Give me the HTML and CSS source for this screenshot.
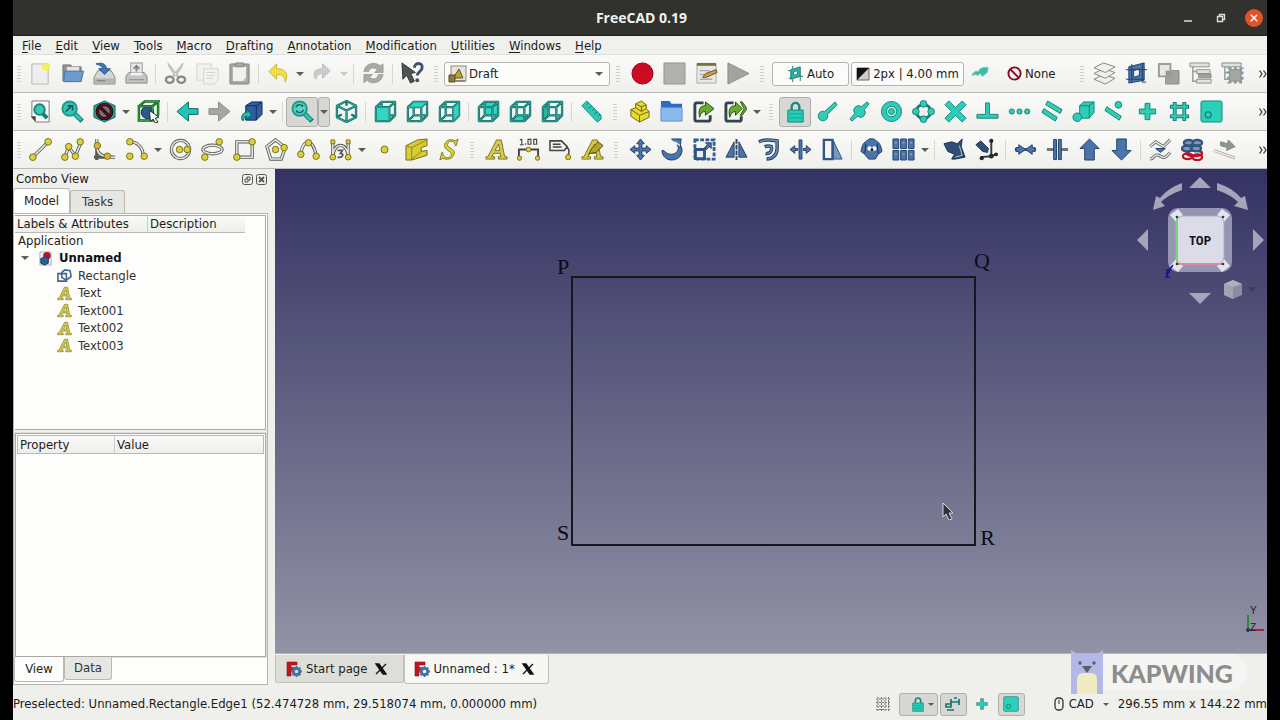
FILE: index.html
```html
<!DOCTYPE html>
<html lang="en">
<head>
<meta charset="utf-8">
<title>FreeCAD 0.19</title>
<link rel="stylesheet" href="styles.css">
</head>
<body>
<svg class="defs" aria-hidden="true">
  <symbol id="cube" viewBox="0 0 24 24"><path class="wire" d="M2 7.500V22H16V7.500zM2 7.500 8 2H22L16 7.500M22 2V16L16 22M8 2V16H22M8 16 2 22"/><path class="wire-lit" d="M2 7.500V22H16V7.500zM2 7.500 8 2H22L16 7.500M22 2V16L16 22M8 2V16H22M8 16 2 22"/></symbol>
  <symbol id="letter-a" viewBox="0 0 24 24"><path d="M1 22v-2.500h2L12 2h5l3.500 17.500H23V22h-9v-2.500h2.500l-.6-3.500H9l-2 3.500h3V22zM10.500 13h5L14.200 6.500z" fill="#d3cb43" stroke="#6c6a20" stroke-width=".9" fill-rule="evenodd"/></symbol>
  <symbol id="fc" viewBox="0 0 16 16"><path d="M1 1h10v3H5v2.500h4v3H5V15H1z" fill="#c8131f" stroke="#8a0f18" stroke-width=".6"/><circle cx="10.500" cy="10.500" r="3.200" fill="none" stroke="#46709f" stroke-width="2.800"/><path d="M10.500 5v2M10.500 14v2M5 10.500h2M14 10.500h2M6.600 6.600 8 8M13 13l1.400 1.400M14.400 6.600 13 8M6.600 14.400 8 13" stroke="#46709f" stroke-width="1.800"/></symbol>
  <symbol id="grid-lock" viewBox="0 0 24 24"><path d="M8 11V7a4 4 0 0 1 8 0v4" fill="none" stroke="#16877c" stroke-width="2.500"/><path d="M4 10.500h16V23H4z" fill="#25cdb6" stroke="#12877a"/><path d="M5 14.500h14M5 18.500h14" stroke="#16a594"/></symbol>
  <symbol id="plane-sq" viewBox="0 0 24 24"><rect x="1" y="1" width="22" height="22" rx="2" fill="#2bd0b8" stroke="#14887c"/><circle cx="8.500" cy="15.500" r="3.200" fill="none" stroke="#128074" stroke-width="1.300"/></symbol>
  <symbol id="chevrons" viewBox="0 0 8 10"><path d="m.5 1.500 2.500 3.500-2.500 3.500M4.500 1.500 7 5 4.500 8.500" fill="none" stroke="#333" stroke-width="1.200"/></symbol>
</svg>
<div class="app">
  <header class="titlebar">
    <h1>FreeCAD 0.19</h1>
    <div class="winbtns">
      <button aria-label="Minimize"><svg viewBox="0 0 18 18"><path d="M5 12h8" stroke="#ddd" stroke-width="1.500"/></svg></button>
      <button aria-label="Restore"><svg viewBox="0 0 18 18"><path d="M5.500 7.500h5v5h-5zM7.500 7V5.500h5v5H11" fill="none" stroke="#ddd" stroke-width="1.400"/></svg></button>
      <button aria-label="Close"><svg viewBox="0 0 18 18"><circle cx="9" cy="9" r="9" fill="#e2532a"/><path d="m5.800 5.800 6.400 6.400m0-6.400-6.400 6.400" stroke="#fff" stroke-width="1.500"/></svg></button>
    </div>
  </header>

  <nav class="menubar">
    <button><u>F</u>ile</button><button><u>E</u>dit</button><button><u>V</u>iew</button><button><u>T</u>ools</button><button><u>M</u>acro</button><button><u>D</u>rafting</button><button><u>A</u>nnotation</button><button><u>M</u>odification</button><button><u>U</u>tilities</button><button><u>W</u>indows</button><button><u>H</u>elp</button>
  </nav>

  <div class="toolbar">
    <i class="grip first"></i>
    <button class="tool" aria-label="New"><svg viewBox="0 0 24 24"><path d="M3 2h17v21H3z" fill="#eee" stroke="#b5b5ae"/><circle cx="18" cy="5" r="4.500" fill="#f5f04a" opacity=".85"/></svg></button>
    <button class="tool" aria-label="Open"><svg viewBox="0 0 24 24"><path d="M2 3h8l2 2h9v15H2z" fill="#8e918e" stroke="#777"/><path d="M6 5h13v6H6z" fill="#e4e4e4"/><path d="M4 9.500h19.500L21 20.500H3z" fill="#6b9acb" stroke="#4a76aa"/></svg></button>
    <button class="tool" aria-label="Save"><svg viewBox="0 0 24 24"><path d="M5 9h14l4 7v7H1v-7z" fill="#d5d5d1" stroke="#888"/><path d="M2 17h20v5H2z" fill="#b5b5b0"/><path d="M4 19.500h9" stroke="#777"/><path d="M3 2c6-2 11 0 11 5h4l-6 6-6-6h4C10 5 7 3 3 2z" fill="#4676b1" stroke="#2a588f"/></svg></button>
    <button class="tool" aria-label="Print"><svg viewBox="0 0 24 24"><path d="M6 1h12v12H6z" fill="#e7e7e7" stroke="#999"/><path d="M12 4v6M9 7l3-3 3 3" stroke="#888" fill="none" stroke-width="2"/><path d="M4 11h16l3 4v7H1v-7z" fill="#c4c4c1" stroke="#888"/><path d="M6 11h12v3H6z" fill="#f2f2f2"/><path d="M4 18.500h16" stroke="#888"/></svg></button>
    <i class="sep"></i>
    <button class="tool" aria-label="Cut"><svg viewBox="0 0 24 24"><path d="M4 1c1 5 4 9 9 14l2-1C10 9 8 5 4 1zM20 1c-1 5-4 9-9 14l-2-1C14 9 16 5 20 1z" fill="#c6c6c4" stroke="#aaa" stroke-width=".6"/><g fill="none" stroke="#878787" stroke-width="2.400"><ellipse cx="6" cy="18.500" rx="4" ry="3.300"/><ellipse cx="18" cy="18.500" rx="4" ry="3.300"/></g></svg></button>
    <button class="tool" aria-label="Copy"><svg viewBox="0 0 24 24"><g fill="#f2f2ef" stroke="#d2d2cf"><path d="M1 2h15v17H1z"/><path d="M8 7h15v12l-4 4H8z"/><path d="M11 11h9M11 14h9M11 17h7"/></g></svg></button>
    <button class="tool" aria-label="Paste"><svg viewBox="0 0 24 24"><rect x="2" y="2" width="20" height="21" rx="1" fill="#a2a29f" stroke="#868683"/><path d="M5 5h14v15H5z" fill="#f1f1ee"/><path d="M8 1h8v4H8z" fill="#aaa" stroke="#888"/><path d="m19 16-4 4h4z" fill="#bbb"/></svg></button>
    <i class="sep"></i>
    <button class="tool" aria-label="Undo"><svg viewBox="0 0 24 24"><path d="m2 10 8-8v5c9 0 13 5 9 14 0-6-3-8-9-8v5z" fill="#efe04b" stroke="#c7b429"/></svg></button><button class="drop" aria-label="Undo list"></button>
    <button class="tool" aria-label="Redo"><svg viewBox="0 0 24 24"><path d="m20 9-8-7v5C4 7 1 11 5 18c1-4 3-6 7-6v5z" fill="#ccc" stroke="#bdbdbd"/></svg></button><button class="drop dim" aria-label="Redo list"></button>
    <i class="sep"></i>
    <button class="tool" aria-label="Refresh"><svg viewBox="0 0 24 24"><path d="M2 10C3 1 14-1 19 4l3-2v9h-9l3-3C12 5 8 6 7 10zM22 13c-1 9-12 11-17 6l-3 3v-9h9l-3 3c4 3 8 2 9-3z" fill="#a9a9a6" stroke="#92928f" stroke-width=".7"/></svg></button>
    <i class="sep"></i>
    <button class="tool" aria-label="What's this"><svg viewBox="0 0 24 24"><path d="m1 1 14 10-5 1 4 8-4 2-4-8-4 4z" fill="#4e5456" stroke="#333"/><path d="M14 6c0-6 9-6 8 0 0 4-5 4-5 8" fill="none" stroke="#40536c" stroke-width="3"/><circle cx="17" cy="19" r="2" fill="#40536c"/></svg></button>
    <i class="grip"></i>
    <label class="combo"><svg viewBox="0 0 20 20"><rect x="3" y="2" width="15" height="15" fill="#e8e6dc" stroke="#8a8870"/><path d="M5 14 11 5l4 9z" fill="#b7a52f" stroke="#5c5726"/><path d="M1 11h6v7H1z" fill="#8d7c35" stroke="#5b4a23"/><path d="M8 17h9" stroke="#555"/></svg><select aria-label="Workbench"><option>Draft</option></select></label>
    <i class="grip"></i>
    <button class="tool" aria-label="Record macro"><svg viewBox="0 0 24 24"><circle cx="12" cy="12" r="11" fill="#cc0a22" stroke="#8d0518"/></svg></button>
    <button class="tool" aria-label="Stop macro"><svg viewBox="0 0 24 24"><path d="M1 1h22v22H1z" fill="#b0b0ae" stroke="#979795"/></svg></button>
    <button class="tool" aria-label="Edit macro"><svg viewBox="0 0 24 24"><path d="M2 2h20v20H2z" fill="#e8e8e4" stroke="#aaa"/><path d="M2 1h20v3H2z" fill="#73733f"/><path d="M5 9h10M5 13h5M5 18h13" stroke="#aaa" stroke-width="1.500"/><path d="m8 16 3-4L22 8l1 3-11 5z" fill="#c69b54" stroke="#665027"/></svg></button>
    <button class="tool" aria-label="Run macro"><svg viewBox="0 0 24 24"><path d="m1 1 22 11L1 23z" fill="#a3a3a1" stroke="#8b8b89"/></svg></button>
    <i class="grip"></i>
    <button class="field plane"><svg viewBox="0 0 18 18"><path d="M4 5 14 2v10L4 15zM7 7v4l4-1V6z" fill="#28b8a8" stroke="#177b73" fill-rule="evenodd"/><path d="M1 6h3M2 14h3M13 12h4M6 15v3M14 12v5M6 1v3" stroke="#177b73"/></svg>Auto</button>
    <button class="field line"><svg viewBox="0 0 14 14"><path d="M1 1h12v12H1z" fill="#ccc" stroke="#666"/><path d="M1 13V1h12z" fill="#111"/></svg>2px | 4.00 mm</button>
    <button class="tool" aria-label="Apply style"><svg viewBox="0 0 24 24"><path d="M3 14c2-4 4-5 7-4 1-4 5-5 10-4l-1 5-5 4-2-3-3 2-2-1z" fill="#35bda9" stroke="#73c8bb"/></svg></button>
    <button class="plain"><svg viewBox="0 0 16 16"><circle cx="8" cy="8" r="6.500" fill="#f5eeee" stroke="#7d0d22" stroke-width="2"/><path d="m3.500 3.500 9 9" stroke="#7d0d22" stroke-width="2"/></svg>None</button>
    <i class="grip far"></i>
    <button class="tool" aria-label="Layers"><svg viewBox="0 0 24 24"><g fill="#efefed" stroke="#858583"><path d="m1 18 10-5 12 4-10 6z"/><path d="m1 12 10-5 12 4-10 6z"/><path d="m1 6 10-5 12 4-10 6z"/></g></svg></button>
    <button class="tool" aria-label="Plane proxy"><svg viewBox="0 0 24 24"><path d="M4 5 20 1v18L4 22z M9 9v7l6-2V7z" fill="#4b75ad" stroke="#203f6b" fill-rule="evenodd"/><path d="M1 8h22M1 18h19M7 2v20M18 1v20h4" stroke="#203f6b" fill="none"/></svg></button>
    <button class="tool" aria-label="Toggle display mode"><svg viewBox="0 0 24 24"><path d="M9 9h14v14H9z" fill="#a1a19f" stroke="#8b8b89"/><path d="M2 2h12v13H2z" fill="#e8e8e6" stroke="#9b9b99" stroke-width="2"/><path d="M9 9h6v7H9z" fill="#9a9a98"/></svg></button>
    <button class="tool" aria-label="Add to group"><svg viewBox="0 0 24 24"><path d="M1 1h20v4H1zM8 8h14v4H8zM8 18h15v4H8z" fill="#dfe3dc" stroke="#8b9188"/><path d="M10 12.500h13v4H10z" fill="#9fa59c" stroke="#8b9188"/><path d="M4 5v15h4M4 10h4" stroke="#999" fill="none" stroke-width="1.500"/></svg></button>
    <button class="tool" aria-label="Select group"><svg viewBox="0 0 24 24"><path d="M1 1h20v4H1z" fill="#dfe3dc" stroke="#858b81"/><path d="M9 8h12v12H9z" fill="#a2aa9f" stroke="#858b81"/><path d="M4 5v13h4M4 11h4" stroke="#999" fill="none" stroke-width="1.500"/><path d="M8 7h14v14H8z" fill="none" stroke="#8598ad" stroke-width="3" stroke-dasharray="3 2.600"/></svg></button>
    <button class="more" aria-label="More tools"><svg><use href="#chevrons"/></svg></button>
  </div>

  <div class="toolbar">
    <i class="grip first"></i>
    <button class="tool" aria-label="Fit all"><svg viewBox="0 0 24 24"><path d="M3 1h18v22H7l-4-5z" fill="#fbfbfb" stroke="#777"/><path d="M2 17h5v6z" fill="#444"/><path d="m14 14 5 5" stroke="#147d75" stroke-width="4"/><circle cx="11" cy="10" r="5.500" fill="#38c8b6" stroke="#17877c" stroke-width="2"/></svg></button>
    <button class="tool" aria-label="Fit selection"><svg viewBox="0 0 24 24"><path d="m13 13 9 9" stroke="#12776f" stroke-width="5"/><path d="m13 13 8 8" stroke="#35c4b3" stroke-width="3"/><circle cx="9" cy="9" r="7.500" fill="#35c4b3" stroke="#1b9a8d" stroke-width="2"/><path d="m5 12 6-6M7 6h5v5" stroke="#094c55" fill="none" stroke-width="1.600"/></svg></button>
    <button class="tool" aria-label="Draw style"><svg viewBox="0 0 24 24"><path d="m12 1 11 5v12l-11 5L1 18V6z" fill="#2aa798" stroke="#12665e"/><circle cx="12" cy="12" r="7.500" fill="#6f7371" stroke="#1d0508" stroke-width="3.500"/><circle cx="12" cy="12" r="7.500" fill="none" stroke="#6b1422" stroke-width="1.500"/><path d="m7 7 10 10" stroke="#4b0a15" stroke-width="3.500"/></svg></button><button class="drop" aria-label="Draw styles"></button>
    <button class="tool" aria-label="Bounding box"><svg viewBox="0 0 24 24"><circle cx="11" cy="13" r="6.500" fill="#2f5893" stroke="#112c51"/><path d="M2 6.500v15h14v-15zl6-5h14l-6 5m6-5v14l-6 6" fill="none" stroke="#0c5f1d" stroke-width="2.600"/><path d="M2 6.500v15h14v-15zl6-5h14l-6 5m6-5v14l-6 6" fill="none" stroke="#35b044"/><path d="m13 11 10 7-4 1 3 4-3 1-2-4-3 2z" fill="#fff" stroke="#222"/></svg></button>
    <i class="sep"></i>
    <button class="tool" aria-label="Back"><svg viewBox="0 0 24 24"><path d="M1 12 13 2v7h10v6H13v7z" fill="#1ec7b4" stroke="#0b635b"/></svg></button>
    <button class="tool" aria-label="Forward"><svg viewBox="0 0 24 24"><path d="M23 12 11 2v7H1v6h10v7z" fill="#a6a6a4" stroke="#8a8a88"/></svg></button>
    <button class="tool" aria-label="Linked object"><svg viewBox="0 0 24 24"><path d="M6 6 12 2h11v13l-6 6H6z" fill="#2f5f9c" stroke="#122d55"/><path d="M6 6h11v15M17 6l6-4" fill="none" stroke="#122d55"/><path d="M2 21c-1-6 2-8 5-8v-3l5 5-5 5v-3c-2 0-3 1-3 4z" fill="#25baa9" stroke="#0c635b"/></svg></button><button class="drop" aria-label="Link actions"></button>
    <i class="sep"></i>
    <button class="tool on" aria-label="Standard zoom" aria-pressed="true"><svg viewBox="0 0 24 24"><path d="m13 13 9 9" stroke="#12776f" stroke-width="5"/><path d="m13 13 8 8" stroke="#35c4b3" stroke-width="3"/><circle cx="9" cy="9" r="7.500" fill="#5fd0c2" stroke="#1b9a8d" stroke-width="2"/><path d="M5 8c1-4 6-4 7-1V5M13 10c-1 4-6 4-7 1v2" stroke="#0f6a66" fill="none" stroke-width="1.500"/></svg></button><button class="drop on" aria-label="Views"></button>
    <button class="tool" aria-label="Isometric"><svg viewBox="0 0 24 24"><path class="wire" d="m12 1 10 5v12l-10 5-10-5V6zM2 6l10 5 10-5M12 11v12M12 1v5M2 18l5-3M22 18l-5-3"/><path class="wire-lit" d="m12 1 10 5v12l-10 5-10-5V6zM2 6l10 5 10-5M12 11v12"/></svg></button>
    <i class="sep"></i>
    <button class="tool" aria-label="Front"><svg viewBox="0 0 24 24"><use href="#cube"/><path d="M3 8.500h12V21H3z" fill="#2bd9c2"/></svg></button>
    <button class="tool" aria-label="Top"><svg viewBox="0 0 24 24"><use href="#cube"/><path d="M3.500 7 8.500 2.500H21L16 7z" fill="#2bd9c2"/></svg></button>
    <button class="tool" aria-label="Right"><svg viewBox="0 0 24 24"><use href="#cube"/><path d="m17 8 4.500-4.500V15.500L17 20.500z" fill="#2bd9c2"/></svg></button>
    <i class="sep"></i>
    <button class="tool" aria-label="Rear"><svg viewBox="0 0 24 24"><path d="M8 2h14v14H8z" fill="#2bd9c2"/><use href="#cube"/></svg></button>
    <button class="tool" aria-label="Bottom"><svg viewBox="0 0 24 24"><path d="m2 22 6-6h14l-6 6z" fill="#2bd9c2"/><use href="#cube"/></svg></button>
    <button class="tool" aria-label="Left"><svg viewBox="0 0 24 24"><path d="M2 7.500 8 2v14l-6 6z" fill="#2bb9a5"/><use href="#cube"/></svg></button>
    <i class="sep"></i>
    <button class="tool" aria-label="Measure"><svg viewBox="0 0 24 24"><path d="m2 6 5-5 15 15v4l-4 3z" fill="#2ccab6" stroke="#12877c"/><path d="m9 3-2 2M12 6 9 9M15 9l-2 2M18 12l-3 3M21 15l-2 2" stroke="#0f6d65"/></svg></button>
    <i class="grip"></i>
    <button class="tool" aria-label="Part"><svg viewBox="0 0 24 24"><path d="m3 10 5-2V4l6-3 5 4v4l3 3v6l-10 5-9-6z" fill="#e9da32" stroke="#6d6510"/><path d="m3 10 9 6 10-4M12 16v7M8 8l6 4 5-3M8 4l6 3 5-2M14 7v5" fill="none" stroke="#6d6510"/></svg></button>
    <button class="tool" aria-label="Group"><svg viewBox="0 0 24 24"><path d="M1 1h9l2 3h11v18H1z" fill="#2c6cc2"/><path d="M1 8h22v14H1z" fill="#8db9ea" stroke="#5e93cf"/></svg></button>
    <button class="tool" aria-label="Make link"><svg viewBox="0 0 24 24"><path d="M12 3H5q-2 0-2 2v15q0 2 2 2h12q2 0 2-2v-4" fill="none" stroke="#34444c" stroke-width="3"/><path d="M8 18C6 9 9 6 14 6V2l9 7-9 7v-4c-4 0-5 2-6 6z" fill="#66ad2f" stroke="#24500d"/></svg></button>
    <button class="tool" aria-label="Link group"><svg viewBox="0 0 24 24"><path d="M10 3H4q-2 0-2 2v15q0 2 2 2h12q2 0 2-2v-3" fill="none" stroke="#34444c" stroke-width="3"/><path d="M6 18C4 9 7 6 12 6V2l7 7-7 7v-4c-3 0-5 2-6 6zM17 2h2l5 7-5 7h-2l4-7z" fill="#66ad2f" stroke="#24500d"/></svg></button><button class="drop" aria-label="Link options"></button>
    <i class="grip"></i>
    <button class="tool on" aria-label="Snap lock" aria-pressed="true"><svg><use href="#grid-lock"/></svg></button>
    <button class="tool" aria-label="Snap endpoint"><svg viewBox="0 0 24 24"><path class="teal" d="M20 2 9 12a5 5 0 1 0 3 3L22 5z"/></svg></button>
    <button class="tool" aria-label="Snap midpoint"><svg viewBox="0 0 24 24"><path class="teal" d="M20 2 14 7a5 5 0 0 0-7 7l-5 6 2 2 6-5a5 5 0 0 0 7-7l5-6z"/></svg></button>
    <button class="tool" aria-label="Snap center"><svg viewBox="0 0 24 24"><circle class="teal" cx="12" cy="12" r="10.500"/><circle cx="12" cy="12" r="5.500" fill="#b7eee5" stroke="#138074"/><circle class="teal" cx="12" cy="12" r="3"/></svg></button>
    <button class="tool" aria-label="Snap angle"><svg viewBox="0 0 24 24"><circle cx="12" cy="12" r="7.500" fill="none" stroke="#1a7d74" stroke-width="3"/><g class="teal"><circle cx="12" cy="4" r="3.500"/><circle cx="20" cy="12" r="3.500"/><circle cx="12" cy="20" r="3.500"/><circle cx="4" cy="12" r="3.500"/></g></svg></button>
    <button class="tool" aria-label="Snap intersection"><svg viewBox="0 0 24 24"><path class="teal" d="m1 5 4-4 7 7 7-7 4 4-7 7 7 7-4 4-7-7-7 7-4-4 7-7z"/></svg></button>
    <button class="tool" aria-label="Snap perpendicular"><svg viewBox="0 0 24 24"><path class="teal" d="M10 3h4v12h9v4H1v-4h9z"/></svg></button>
    <button class="tool" aria-label="Snap extension"><svg viewBox="0 0 24 24"><g class="teal"><circle cx="4" cy="12" r="2.700"/><circle cx="12" cy="12" r="2.700"/><circle cx="20" cy="12" r="2.700"/></g></svg></button>
    <button class="tool" aria-label="Snap parallel"><svg viewBox="0 0 24 24"><path class="teal" d="m6 5 2-4 15 9-2 4zM2 13l2-4 14 9-2 4z"/></svg></button>
    <button class="tool" aria-label="Snap special"><svg viewBox="0 0 24 24"><path class="teal" d="m8 6 4-4h11v11l-5 6H8z"/><path d="M8 6h10v13M18 6l5-4" stroke="#138074" fill="none"/><circle class="teal" cx="5.500" cy="18" r="4.500"/></svg></button>
    <button class="tool" aria-label="Snap near"><svg viewBox="0 0 24 24"><path class="teal" d="m1 11 2-4 15 10-2 4z"/><circle class="teal" cx="15" cy="5" r="3.500"/></svg></button>
    <button class="tool" aria-label="Snap ortho"><svg viewBox="0 0 24 24"><path class="teal" d="M9.500 3.500h5v6h6v5h-6v6h-5v-6h-6v-5h6z"/></svg></button>
    <button class="tool" aria-label="Snap grid"><svg viewBox="0 0 24 24"><path d="M7 2v20M17 2v20M2 7h20M2 17h20" stroke="#137a70" stroke-width="4"/><path d="M7 3v18M17 3v18M3 7h18M3 17h18" stroke="#36cab8" stroke-width="2"/></svg></button>
    <button class="tool" aria-label="Snap working plane"><svg><use href="#plane-sq"/></svg></button>
    <button class="more" aria-label="More tools"><svg><use href="#chevrons"/></svg></button>
  </div>

  <div class="toolbar">
    <i class="grip first"></i>
    <button class="tool" aria-label="Line"><svg viewBox="0 0 24 24"><path class="edge" d="M4 20 20 4"/><path class="core" d="M4 20 20 4"/><g class="dot"><circle cx="4" cy="20" r="3.500"/><circle cx="20" cy="4" r="3.500"/></g></svg></button>
    <button class="tool" aria-label="Polyline"><svg viewBox="0 0 24 24"><path class="edge" d="M4 20 8 9l7 10 6-15"/><path class="core" d="M4 20 8 9l7 10 6-15"/><g class="dot"><circle cx="4" cy="20" r="3.400"/><circle cx="8" cy="9" r="3.400"/><circle cx="15" cy="19" r="3.400"/><circle cx="20" cy="4" r="3.400"/></g></svg></button>
    <button class="tool" aria-label="Fillet"><svg viewBox="0 0 24 24"><path class="edge" d="M4 1v22M1 20h22M4 8c0 7 4 11 11 11"/><path class="core" d="M4 1v7M15 20h8M4 8c0 7 4 11 11 11"/><g class="dot amber"><circle cx="4.500" cy="8" r="3.400"/><circle cx="15" cy="19" r="3.400"/></g></svg></button>
    <button class="tool" aria-label="Arc"><svg viewBox="0 0 24 24"><path class="edge" d="M5 4c8 0 14 6 14 15"/><path class="core" d="M5 4c8 0 14 6 14 15"/><g class="dot"><circle cx="5" cy="4" r="3.400"/><circle cx="5" cy="19" r="3.400"/><circle cx="20" cy="19" r="3.400"/></g></svg></button><button class="drop" aria-label="Arc tools"></button>
    <button class="tool" aria-label="Circle"><svg viewBox="0 0 24 24"><circle class="edge" cx="12" cy="12" r="9.500"/><circle class="core" cx="12" cy="12" r="9.500"/><g class="dot"><circle cx="11" cy="12" r="3.400"/><circle cx="19" cy="12" r="3.400"/></g></svg></button>
    <button class="tool" aria-label="Ellipse"><svg viewBox="0 0 24 24"><ellipse class="edge" cx="12" cy="12" rx="10" ry="4.500"/><ellipse class="core" cx="12" cy="12" rx="10" ry="4.500"/><g class="dot"><circle cx="4" cy="20" r="3.400"/><circle cx="19" cy="4" r="3.400"/></g></svg></button>
    <button class="tool" aria-label="Rectangle"><svg viewBox="0 0 24 24"><path class="edge" d="M4 4h16v16H4z"/><path class="core" d="M4 4h16v16H4z"/><g class="dot"><circle cx="4" cy="20" r="3.400"/><circle cx="20" cy="4" r="3.400"/></g></svg></button>
    <button class="tool" aria-label="Polygon"><svg viewBox="0 0 24 24"><path class="edge" d="m11 2 10 8-4 12H6L2 9z"/><path class="core" d="m11 2 10 8-4 12H6L2 9z"/><g class="dot"><circle cx="11" cy="12" r="3.400"/><circle cx="20" cy="10" r="3.400"/></g></svg></button>
    <button class="tool" aria-label="B-spline"><svg viewBox="0 0 24 24"><path class="edge" d="M4 17C6 0 17 0 20 19"/><path class="core" d="M4 17C6 0 17 0 20 19"/><g class="dot"><circle cx="4" cy="17" r="3.400"/><circle cx="12" cy="5" r="3.400"/><circle cx="20" cy="19" r="3.400"/></g></svg></button>
    <button class="tool" aria-label="Bezier curve"><svg viewBox="0 0 24 24"><path class="edge" d="M4 4v16M20 4v16M4 19C5 4 19 4 20 19"/><path class="core" d="M4 4v16M20 4v16M4 19C5 4 19 4 20 19"/><path d="M9 13h5l-2 3c4 0 3 5-3 4" fill="none" stroke="#555" stroke-width="1.800"/><g class="dot"><path d="M2 2h4v4H2zM18 2h4v4h-4z"/><circle cx="4" cy="20" r="3"/><circle cx="20" cy="20" r="3"/></g></svg></button><button class="drop" aria-label="Bezier tools"></button>
    <button class="tool" aria-label="Point"><svg viewBox="0 0 24 24"><circle class="dot" cx="12" cy="12" r="3.700"/></svg></button>
    <button class="tool" aria-label="Facebinder"><svg viewBox="0 0 24 24"><path d="M1 8 13 2l10-1v7l-6 2v4l6-1v5L7 23H1z" fill="#d6cc33" stroke="#746c12"/><path d="m1 8 6 2v13M7 10 23 2M7 22l10-8" fill="none" stroke="#8e851a"/></svg></button>
    <button class="tool" aria-label="Shape string"><svg viewBox="0 0 24 24"><path d="m22 1-2 7h-1c0-6-8-6-8-1 0 4 8 4 7 9-1 7-9 7-12 5l-3 2 2-8h1c0 7 8 7 9 2 0-4-8-4-7-10 1-6 8-6 11-4z" fill="#dcd33a" stroke="#827b1b"/></svg></button>
    <i class="grip"></i>
    <button class="tool" aria-label="Text"><svg><use href="#letter-a"/></svg></button>
    <button class="tool" aria-label="Dimension"><svg viewBox="0 0 24 24"><path d="M2 11v10M22 11v10M2 12h20" fill="none" stroke="#454542" stroke-width="2"/><path d="M5 1v6M3 2l2-1M3 7h4M9 5.500V7M11.500 1.500h3v5h-3zM17.500 1.500h3v5h-3z" fill="none" stroke="#454542" stroke-width="1.200"/><g class="dot"><circle cx="2.500" cy="21" r="2.300"/><circle cx="21.500" cy="21" r="2.300"/><circle cx="12" cy="12" r="2.500"/></g></svg></button>
    <button class="tool" aria-label="Label"><svg viewBox="0 0 24 24"><path d="M1 3h12l6 6-3 4H1zM4 6.500h8M4 9.500h9M18 10c4 1 3 5 2 8" fill="#eee" stroke="#454542" stroke-width="1.600"/><circle class="dot" cx="20" cy="20" r="2.700"/></svg></button>
    <button class="tool" aria-label="Annotation styles"><svg viewBox="0 0 24 24"><use href="#letter-a"/><path d="m8 17 3-6 7-7 5 4-7 7-6 1z" fill="#b3a330" stroke="#5a5115"/></svg></button>
    <i class="grip"></i>
    <button class="tool" aria-label="Move"><svg viewBox="0 0 24 24"><path class="blue" d="m12 1 4 5h-2.500v4.500H18V8l5 4-5 4v-2.500h-4.500V18H16l-4 5-4-5h2.500v-4.500H6V16l-5-4 5-4v2.500h4.500V6H8z"/></svg></button>
    <button class="tool" aria-label="Rotate"><svg viewBox="0 0 24 24"><path class="blue" d="M11 1h10l-1 9-3-3c3 5-1 10-6 10-3 0-6-1-8-4H1c0 6 5 10 10 10 9 0 14-9 9-16M11 1l3 3"/></svg></button>
    <button class="tool" aria-label="Scale"><svg viewBox="0 0 24 24"><path d="M2 2h20v20H2z" fill="none" stroke="#345d92" stroke-width="3" stroke-dasharray="4 1.500"/><path d="M2.500 12h9.500v9.500H2.500z" fill="#e8edf3" stroke="#2f5484" stroke-width="3"/><path class="blue" d="m12 10 3-3-2-2h6v6l-2-2-3 3z"/></svg></button>
    <button class="tool" aria-label="Mirror"><svg viewBox="0 0 24 24"><path class="blue" d="M9.500 4v16H1zM14.500 4v16H23z"/><path d="M12 1v22" stroke="#29466b" stroke-width="2" stroke-dasharray="5 1"/></svg></button>
    <button class="tool" aria-label="Offset"><svg viewBox="0 0 24 24"><path d="M2 4c6-3 12-2 19-1v8c0 7-5 11-11 11M8 9c3-1 5-1 7 0 1 5-2 8-6 7" fill="none" stroke="#223f64" stroke-width="3.600"/><path d="M3 4c6-3 12-2 18-1v8c0 7-5 10-10 11M9 9c3-1 4-1 6 0 1 5-2 8-5 7" fill="none" stroke="#6c8fb7" stroke-width="1.600"/></svg></button>
    <button class="tool" aria-label="Trimex"><svg viewBox="0 0 24 24"><path class="blue" d="m1 12 5-4v3h3v2H6v3zM23 12l-5-4v3h-3v2h3v3zM10.500 2h3v20h-3z"/></svg></button>
    <button class="tool" aria-label="Stretch"><svg viewBox="0 0 24 24"><path d="M3 2h9v20H3z" fill="#f4f4f4" stroke="#315787" stroke-width="2.500"/><path d="m13 3 9 19h-9z" fill="#7998bb" stroke="#315787"/></svg></button>
    <i class="sep"></i>
    <button class="tool" aria-label="Clone"><svg viewBox="0 0 24 24"><path class="blue" d="M7 3c2-3 8-3 10 0 4 2 5 6 6 11l-4 3-3 5H9l-4-5-4-3C2 9 3 5 7 3z"/><path d="M6 6 5 16M18 6l1 10" stroke="#142c4b"/><circle cx="10" cy="11" r="2.300" fill="#fff"/><circle cx="15" cy="11" r="2.300" fill="#fff"/><circle cx="12.500" cy="12" r="1.400" fill="#111"/></svg></button>
    <button class="tool" aria-label="Array"><svg viewBox="0 0 24 24"><path class="blue" d="M1 1h6v10H1zM9 1h6v10H9zM17 1h6v10h-6zM1 13h6v10H1zM9 13h6v10H9zM17 13h6v10h-6z"/><path d="M3 5h2M11 5h2M19 5h2M3 17h2M11 17h2M19 17h2" stroke="#abc3df"/></svg></button><button class="drop" aria-label="Array tools"></button>
    <i class="sep"></i>
    <button class="tool" aria-label="Edit"><svg viewBox="0 0 24 24"><path class="navy" d="m1 6 8-2 6 2 5-5-1 8 4 11-10 2H9l3-5-7-3z"/><path d="m17 8 3 10-7 2" stroke="#b5c4d3" fill="none"/></svg></button>
    <button class="tool" aria-label="Subelement highlight"><svg viewBox="0 0 24 24"><path class="navy" d="m1 7 5-4 8 8-1 4-5-1z"/><path d="M17 3v16l5-2M6 20l11-1" stroke="#31383d" stroke-width="2" fill="none"/><g fill="#23282c"><circle cx="17" cy="3" r="2.200"/><circle cx="7" cy="21" r="2.200"/><circle cx="22" cy="17" r="2"/><circle cx="17" cy="19" r="2.500"/></g></svg></button>
    <i class="sep"></i>
    <button class="tool" aria-label="Join"><svg viewBox="0 0 24 24"><path d="M1 12h22" stroke="#314e73" stroke-width="3"/><path class="blue" d="m5 7 7 5-7 5v-3H2v-4h3zM19 7l-7 5 7 5v-3h3v-4h-3z"/></svg></button>
    <button class="tool" aria-label="Split"><svg viewBox="0 0 24 24"><path d="M1 12h8M15 12h8" stroke="#6b7881" stroke-width="3"/><path class="blue" d="M8 1.500h3v21H8zM13 1.500h3v21h-3z"/></svg></button>
    <button class="tool" aria-label="Upgrade"><svg viewBox="0 0 24 24"><path class="blue" d="m12 1 10 10h-5v12H7V11H2z"/></svg></button>
    <button class="tool" aria-label="Downgrade"><svg viewBox="0 0 24 24"><path class="blue" d="m12 23 10-10h-5V1H7v12H2z"/></svg></button>
    <i class="sep"></i>
    <button class="tool" aria-label="Wire to B-spline"><svg viewBox="0 0 24 24"><path d="m1 9 6-5 8 5 7-7M1 22c5 0 4-6 9-4s6 5 12-3" fill="none" stroke="#62676a" stroke-width="3.200"/><path d="m1 9 6-5 8 5 7-7M1 22c5 0 4-6 9-4s6 5 12-3" fill="none" stroke="#ececec" stroke-width="1.400"/><path class="blue" d="M7 11h10l-5 4z"/></svg></button>
    <button class="tool" aria-label="Draft to sketch"><svg viewBox="0 0 24 24"><g fill="none" stroke="#b5142b" stroke-width="2.400"><ellipse cx="7" cy="19" rx="5" ry="3"/><ellipse cx="17" cy="20" rx="5" ry="3"/><ellipse cx="14" cy="16" rx="8" ry="3"/></g><g fill="#7d97b6" stroke="#31547f" stroke-width="2.400"><ellipse cx="8" cy="5" rx="5" ry="3"/><ellipse cx="17" cy="5" rx="5" ry="3"/><ellipse cx="6" cy="11" rx="5" ry="3"/><ellipse cx="16" cy="11" rx="5" ry="3"/></g></svg></button>
    <button class="tool" aria-label="Set slope"><svg viewBox="0 0 24 24"><path d="m1 13 22 8" stroke="#a6a69e" stroke-width="3"/><path d="m1 13 22 8" stroke="#eeeee4" stroke-width="1.500"/><path d="m8 4 7 2 1-4 7 7-9 4 1-3-7-2z" fill="#8c9793" stroke="#7c8582"/></svg></button>
    <button class="more" aria-label="More tools"><svg><use href="#chevrons"/></svg></button>
  </div>

  <main class="work">
    <aside class="dock">
      <div class="dock-title"><h2>Combo View</h2>
        <button aria-label="Float"><svg viewBox="0 0 11 11"><rect x=".5" y=".5" width="10" height="10" rx="2"/><path d="M3 5h3v3H3zM5 5V3h3v3H6"/></svg></button>
        <button aria-label="Close panel"><svg viewBox="0 0 11 11"><rect x=".5" y=".5" width="10" height="10" rx="2"/><path d="m3 3 5 5m0-5L3 8" stroke-width="1.800"/></svg></button>
      </div>
      <div class="tabs top"><button class="current">Model</button><button>Tasks</button></div>
      <div class="pane">
        <section class="tree">
          <div class="tree-head"><span>Labels &amp; Attributes</span><span>Description</span></div>
          <ul>
            <li>Application</li>
            <li class="doc"><i class="caret"></i><svg viewBox="0 0 16 16"><path d="M2 1h12v14H2z" fill="#e8eef4" stroke="#a4b5c6"/><circle cx="9.500" cy="5" r="4" fill="#b51528"/><path d="m3 8 5-2 3 2v5l-4 2-4-2z" fill="#2e5e93" stroke="#173c66"/></svg><b>Unnamed</b></li>
            <li class="obj"><svg viewBox="0 0 16 16"><g fill="none" stroke="#45678f" stroke-width="1.700"><path d="M1 6h9v8H1z"/><path d="m8 2 6 1 1 6-5 4-5-3V5z"/></g></svg>Rectangle</li>
            <li class="obj"><svg><use href="#letter-a"/></svg>Text</li>
            <li class="obj"><svg><use href="#letter-a"/></svg>Text001</li>
            <li class="obj"><svg><use href="#letter-a"/></svg>Text002</li>
            <li class="obj"><svg><use href="#letter-a"/></svg>Text003</li>
          </ul>
        </section>
        <div class="splitter"></div>
        <section class="props">
          <table><thead><tr><th>Property</th><th>Value</th></tr></thead></table>
        </section>
        <div class="tabs bottom"><button class="current">View</button><button>Data</button></div>
      </div>
    </aside>

    <div class="center">
      <section class="view3d">
        <div class="drawing">
          <span class="pt p">P</span><span class="pt q">Q</span><span class="pt s">S</span><span class="pt r">R</span>
        </div>
        <svg class="cursor" viewBox="0 0 12 19"><path d="M1 1v14l3-3 3 6 3-1-3-6h4z" fill="#30303c" stroke="#d5d5dd"/></svg>
        <svg class="navcube" viewBox="0 0 130 134">
          <g fill="#a4a4bb">
            <path d="m63 7 11 11H52zM63 134 52 123h22zM0 70l11-11v22zM127 70l-11-11v22z"/>
            <path d="M45 13v7q-14 5-21 12l4 4-12 4 3-14 4 2q8-10 22-15zM80 13v7q14 5 21 12l-4 4 14 4-3-14-4 2q-8-10-24-15z"/>
          </g>
          <rect x="31" y="38" width="64" height="64" rx="10" fill="#a5a5bf" opacity=".85"/>
          <path d="m33 45 8-6 5 6-7 7zM93 45l-8-6-5 6 7 7zM33 96l8 6 5-6-7-7zM93 96l-8 6-5-6 7-7z" fill="#e5e5f2"/>
          <rect x="39" y="46" width="48" height="48" rx="7" fill="#dcdce8" stroke="#aaaabd"/>
          <path d="M40 93V47" stroke="#73d77b" stroke-width="2"/><path d="M40 94h46" stroke="#df8a9a" stroke-width="2"/>
          <g fill="#333"><circle cx="40" cy="47" r="1.300"/><circle cx="86" cy="47" r="1.300"/><circle cx="40" cy="94" r="1.300"/><circle cx="86" cy="94" r="1.300"/></g>
          <path d="m36 95-7 9m0-4h4l-4 7h4" fill="none" stroke="#14149b" stroke-width="1.500"/>
          <text x="63" y="75" text-anchor="middle">TOP</text>
        </svg>
        <svg class="minicube" viewBox="0 0 34 22"><path d="m1 5 9-4 9 4v11l-9 4-9-4z" fill="#8b8ba0"/><path d="m1 5 9 3v12l-9-4z" fill="#a3a3b4"/><path d="m1 5 9-4 9 4-9 3z" fill="#b0b0be"/><path d="M25 8h8l-4 5z" fill="#3d3d55"/></svg>
        <svg class="axes" viewBox="0 0 24 30"><path d="M5 9v15" stroke="#258a33" stroke-width="2"/><path d="M5 24h16" stroke="#a5243b" stroke-width="2"/><circle cx="5" cy="24" r="2" fill="#173b77"/><text x="7" y="8">Y</text><text x="7" y="25">Z</text></svg>
      </section>
      <div class="mdi">
        <div class="mdi-tab"><svg><use href="#fc"/></svg>Start page<button aria-label="Close Start page"><svg viewBox="0 0 12 12"><path d="M1 1h3l7 10H8zM11 1 1 11" fill="#111" stroke="#111" stroke-width="1.300"/></svg></button></div>
        <div class="mdi-tab current"><svg><use href="#fc"/></svg>Unnamed : 1*<button aria-label="Close Unnamed"><svg viewBox="0 0 12 12"><path d="M1 1h3l7 10H8zM11 1 1 11" fill="#111" stroke="#111" stroke-width="1.300"/></svg></button></div>
      </div>
      <div class="watermark">
        <svg viewBox="0 0 32 44"><path d="m0 0 6 4h20l6-4v44H0z" fill="#b3b8e6"/><path d="M6 44V30q0-7 6-7h8q6 0 6 7v14z" fill="#efebc2"/><path d="M11 16h10l-5 7z" fill="#5b5d69"/><circle cx="9" cy="13" r="1.700" fill="#5b5d69"/><circle cx="23" cy="13" r="1.700" fill="#5b5d69"/></svg>
        <span>KAPWING</span>
      </div>
    </div>
  </main>

  <footer class="status">
    <output>Preselected: Unnamed.Rectangle.Edge1 (52.474728 mm, 29.518074 mm, 0.000000 mm)</output>
    <div class="status-tools">
      <button aria-label="Toggle grid"><svg viewBox="0 0 16 16"><path d="M3 1v14M6.500 1v14M10 1v14M13.500 1v14M1 3h14M1 6.500h14M1 10h14M1 13.500h14" stroke="#777" stroke-dasharray="2 1"/></svg></button>
      <button class="on wide" aria-label="Snap lock" aria-pressed="true"><svg><use href="#grid-lock"/></svg><i class="caret"></i></button>
      <button class="on" aria-label="Dimensions" aria-pressed="true"><svg viewBox="0 0 16 16"><path d="M6 6h8M6 3v7M14 3v6M1 8h5v3H1zM2 14h7M9 2h3" fill="none" stroke="#1b746d" stroke-width="1.700"/></svg></button>
      <button aria-label="Ortho"><svg viewBox="0 0 24 24"><path class="teal" d="M10 4h4v6h6v4h-6v6h-4v-6H4v-4h6z"/></svg></button>
      <button class="on" aria-label="Working plane" aria-pressed="true"><svg><use href="#plane-sq"/></svg></button>
    </div>
    <button class="nav-style"><svg viewBox="0 0 10 14"><rect x="1" y="1" width="8" height="12" rx="3.500" fill="none" stroke="#333" stroke-width="1.300"/><path d="M5 3v4" stroke="#333"/></svg>CAD<i class="caret"></i></button>
    <span class="dims">296.55 mm x 144.22 mm</span>
  </footer>
</div>
</body>
</html>
```
FILE: styles.css
```css
* { box-sizing: border-box; }
body {
  margin: 0;
  padding: 0 13px;
  background: #000;
  color: #1c1c1c;
  font: 13px/16px "DejaVu Sans Condensed", "DejaVu Sans", sans-serif;
}
button, select { font: inherit; color: inherit; margin: 0; padding: 0; border: 0; background: none; }
h1, h2, ul { margin: 0; padding: 0; list-style: none; font: inherit; }
svg { display: block; flex: none; }
.defs { position: absolute; width: 0; height: 0; }
.app { height: 100vh; display: flex; flex-direction: column; background: #efefec; }

.wire { fill: none; stroke: #116f68; stroke-width: 2.4; stroke-linejoin: round; }
.wire-lit { fill: none; stroke: #3fb5a8; stroke-width: .8; stroke-linejoin: round; }
.teal { fill: #2fcdb8; stroke: #158478; }
.blue { fill: #4a74ab; stroke: #243f66; }
.navy { fill: #304f78; stroke: #1c2f49; }
.dot { fill: #d9cf3f; stroke: #77711c; }
.amber { fill: #dfae38; }
.edge { fill: none; stroke: #5c5c57; stroke-width: 3.4; }
.core { fill: none; stroke: #e6e6e3; stroke-width: 1.6; }

.titlebar { position: relative; flex: none; height: 36px; background: #31312d; border-bottom: 1px solid #1d1d1a; display: flex; align-items: center; justify-content: center; padding-left: 3px; }
.titlebar h1 { color: #f2f2ee; font: bold 14px/20px "Open Sans", "Noto Sans", sans-serif; }
.winbtns { position: absolute; right: 4px; top: 9px; display: flex; gap: 15px; }
.winbtns svg { width: 18px; height: 18px; }

.menubar { flex: none; height: 19px; display: flex; align-items: center; padding-left: 2px; background: #f0f0ed; border-bottom: 1px solid #e0e0dd; }
.menubar button { padding: 1px 7px 0; }
.menubar u { text-underline-offset: 2px; }

.toolbar { flex: none; height: 38px; display: flex; align-items: center; background: linear-gradient(#fafaf8, #efefec); border-bottom: 1px solid #b9b9b6; }
.tool { flex: none; width: 32px; height: 30px; display: grid; place-items: center; }
.tool svg { width: 23px; height: 23px; }
.on { background: #d7d7d4; border: 1px solid #aeaeab; border-radius: 3px; }
.drop { flex: none; width: 12px; height: 30px; display: grid; place-items: center; }
.drop::before, .caret, .combo::after { content: ""; border: 4px solid transparent; border-top-color: #5b5b59; border-bottom: 0; }
.drop.dim::before { border-top-color: #c9c9c6; }
.sep { flex: none; width: 1px; height: 20px; margin: 0 3px; background: #d6d6d3; }
.grip { flex: none; width: 4px; height: 18px; margin: 0 6px; background: radial-gradient(circle, #cfcfcc 1px, transparent 1px) 0 0 / 2px 3px; }
.grip.first { margin: 0 3px 0 4px; }
.grip.far { margin-left: auto; margin-right: 4px; }
.more { flex: none; width: 19px; height: 30px; margin-left: auto; display: grid; place-items: center end; }
.far ~ .more { margin-left: 0; }
.more svg { width: 8px; height: 10px; }
.combo { position: relative; flex: none; width: 166px; height: 24px; }
.combo svg { position: absolute; left: 4px; top: 2px; width: 20px; height: 20px; }
.combo select { appearance: none; width: 100%; height: 100%; padding-left: 24px; border: 1px solid #b4b4b1; border-radius: 3px; background: #fcfcfa; }
.combo::after { position: absolute; right: 7px; top: 10px; }
.field { flex: none; display: flex; align-items: center; justify-content: center; gap: 3px; height: 24px; border: 1px solid #b4b4b1; border-radius: 3px; background: #fbfbf9; white-space: nowrap; margin-left: 2px; }
.field.plane { width: 77px; }
.field.line { width: 113px; }
.plane svg { width: 17px; height: 17px; }
.line svg { width: 14px; height: 14px; }
.plain { display: flex; align-items: center; gap: 3px; margin-left: 11px; }
.plain svg { width: 15px; height: 15px; }

.work { flex: 1; min-height: 0; display: flex; }
.dock { flex: none; width: 262px; padding: 1px 7px 0 0; display: flex; flex-direction: column; }
.dock-title { display: flex; align-items: center; height: 18px; gap: 3px; padding: 0 1px 0 3px; }
.dock-title h2 { flex: 1; }
.dock-title svg { width: 11px; height: 11px; fill: none; stroke: #555; }
.tabs { flex: none; display: flex; }
.tabs button { border: 1px solid #b9b9b6; background: #e6e6e3; color: #333; }
.tabs .current { background: #fdfdfb; color: #222; }
.tabs.top { height: 25px; align-items: flex-end; }
.tabs.top button { width: 55px; height: 23px; border-bottom: 0; border-radius: 3px 3px 0 0; }
.tabs.top .current { width: 57px; height: 25px; }
.pane { flex: 1; min-height: 0; display: flex; flex-direction: column; border: 1px solid #b4b4b1; background: #fdfdfb; }
.tree { flex: none; height: 215px; margin: 1px 1px 0; border: 1px solid #a9a9a6; border-width: 1px 1px 1px 0; }
.tree-head { display: flex; height: 17px; margin-right: 20px; background: linear-gradient(#fafaf8, #ededea); border-bottom: 1px solid #b9b9b6; }
.tree-head span { width: 133px; padding-left: 2px; white-space: nowrap; border-right: 1px solid #ccccc9; }
.tree-head span:last-child { width: auto; flex: 1; border: 0; }
.tree li { display: flex; align-items: center; height: 18px; padding-left: 3px; }
.tree li:nth-child(odd) { height: 17px; }
.tree li:first-child { height: 16px; }
.tree svg { width: 15px; height: 15px; margin-right: 6px; }
.tree .doc { padding-left: 6px; color: #111; }
.tree .caret { margin-right: 9px; }
.tree .obj { padding-left: 42px; color: #333; }
.splitter { flex: none; height: 3px; background: #efefec; }
.props { flex: 1; min-height: 0; margin: 0 1px; padding: 1px; border: 1px solid #a9a9a6; background: #fdfdfb; outline: 1px solid #dededb; }
.props table { width: 100%; border-collapse: collapse; background: linear-gradient(#fafaf8, #ededea); border: 1px solid #b9b9b6; }
.props th { height: 18px; padding: 0 2px; text-align: left; font-weight: normal; }
.props th:first-child { width: 97px; border-right: 1px solid #ccccc9; }
.tabs.bottom { height: 27px; align-items: flex-start; }
.tabs.bottom button { width: 48px; height: 23px; border-top: 0; border-radius: 0 0 3px 3px; }
.tabs.bottom .current { width: 50px; height: 25px; }

.center { position: relative; flex: 1; min-width: 0; display: flex; flex-direction: column; }
.view3d { position: relative; flex: 1; overflow: hidden; background: linear-gradient(#343263, #9293a5); border-bottom: 1px solid #b5b5b8; }
.drawing { position: absolute; left: 296px; top: 107px; width: 405px; height: 270px; border: 2px solid #17171f; }
.pt { position: absolute; font: 22px/22px "Liberation Serif", serif; color: #0b0b18; }
.pt.p { left: -16px; top: -22px; }
.pt.q { right: -16px; top: -28px; }
.pt.s { left: -16px; bottom: 0; }
.pt.r { right: -21px; bottom: -5px; }
.cursor { position: absolute; left: 667px; top: 333px; width: 12px; height: 19px; }
.navcube { position: absolute; right: 0; top: 1px; width: 130px; height: 134px; overflow: visible; }
.navcube text { font: bold 13px "Liberation Sans Narrow", "Roboto Condensed", Roboto, sans-serif; fill: #15151c; }
.minicube { position: absolute; right: 10px; top: 110px; width: 34px; height: 22px; }
.axes { position: absolute; right: 0; bottom: 17px; width: 24px; height: 30px; }
.axes text { font: 10px "Liberation Sans", sans-serif; fill: #181830; }
.mdi { flex: none; display: flex; height: 31px; align-items: flex-start; padding-top: 1px; }
.mdi-tab { display: flex; align-items: center; height: 28px; gap: 4px; padding: 0 16px 0 10px; border: 1px solid #c0c0bd; border-top: 0; background: #deded9; border-radius: 0 0 3px 3px; }
.mdi-tab.current { height: 29px; padding: 0 14px 0 9px; background: #f7f7f4; }
.mdi-tab svg { width: 16px; height: 16px; }
.mdi-tab button { margin-left: 3px; }
.mdi-tab button svg { width: 12px; height: 12px; }
.watermark { position: absolute; right: 19px; bottom: -9px; height: 44px; display: flex; align-items: center; }
.watermark svg { width: 32px; height: 44px; }
.watermark span { height: 36px; padding: 0 15px 0 8px; border-radius: 0 18px 18px 0; background: #f5f5f3; color: #8d8d8b; font: 900 25px/38px Lato, sans-serif; }

.status { flex: none; height: 35px; padding-top: 3px; display: flex; align-items: center; white-space: nowrap; }
.status output { flex: 1; min-width: 0; overflow: hidden; }
.status-tools { display: flex; align-items: center; gap: 2px; }
.status-tools button { width: 27px; height: 23px; display: flex; align-items: center; justify-content: center; gap: 2px; }
.status-tools .wide { width: 39px; padding-left: 8px; }
.status-tools svg { width: 16px; height: 16px; }
.status .caret { border-width: 3px 3px 0; }
.nav-style { display: flex; align-items: center; gap: 5px; margin-left: 29px; }
.nav-style svg { width: 10px; height: 14px; }
.nav-style .caret { margin-left: 4px; }
.dims { flex: none; margin-left: 9px; }
```
